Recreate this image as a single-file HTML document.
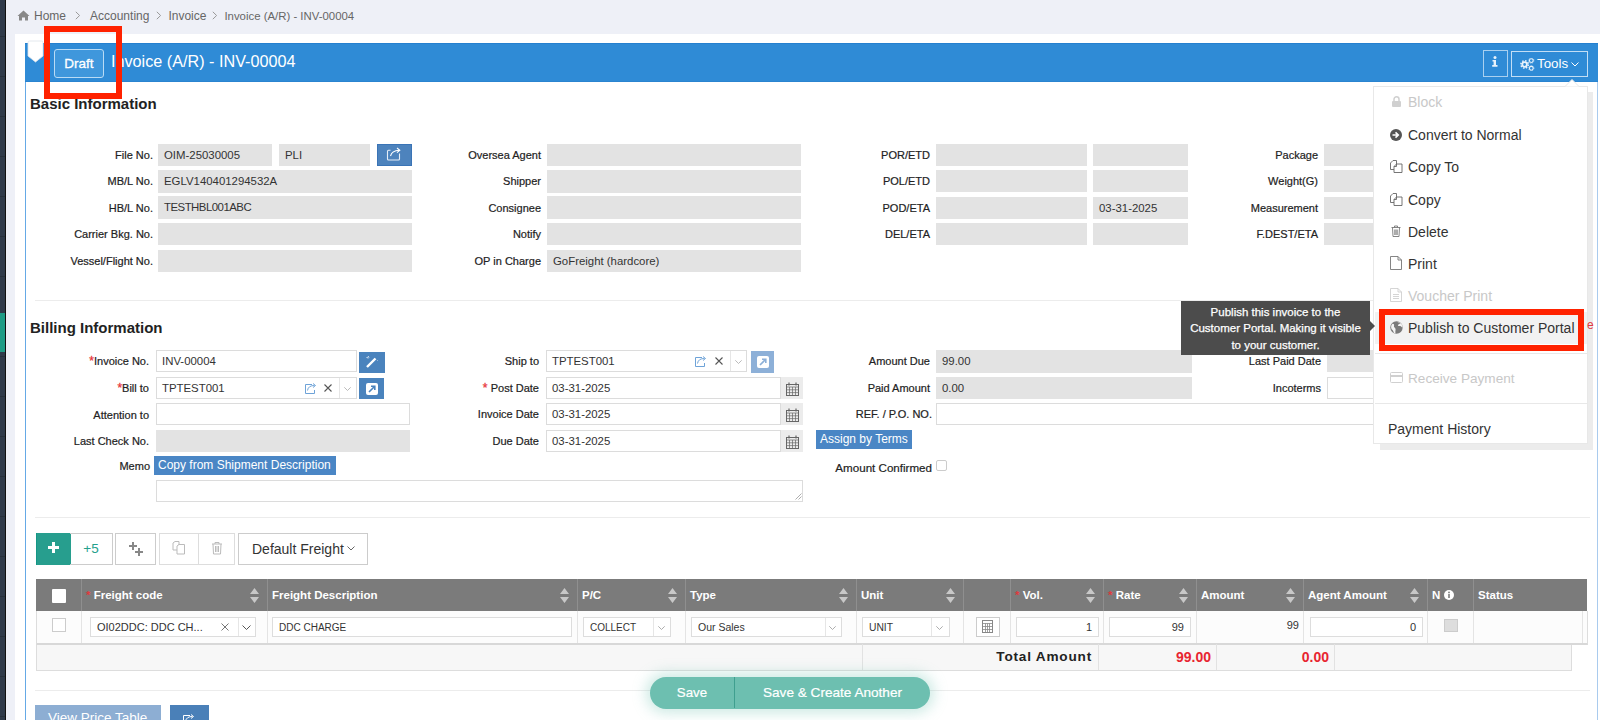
<!DOCTYPE html>
<html><head><meta charset="utf-8">
<style>
*{box-sizing:border-box;margin:0;padding:0}
html,body{width:1600px;height:720px;overflow:hidden;background:#eef0f7;font-family:"Liberation Sans",sans-serif;color:#333}
.a{position:absolute}
svg.a{overflow:visible}
.l{position:absolute;font-size:11px;color:#222;-webkit-text-stroke:0.2px #222;text-align:right;white-space:nowrap;height:22px;line-height:22px}
.g{position:absolute;background:#e3e3e3;height:22px;font-size:11.4px;color:#333;padding-left:6px;line-height:22px;white-space:nowrap}
.w{position:absolute;background:#fff;border:1px solid #dcdcdc;height:22px;font-size:11.4px;color:#333;padding-left:5px;line-height:20px;white-space:nowrap}
.mi{position:absolute;left:1408px;font-size:14px;color:#333;white-space:nowrap;line-height:16px;height:16px}
.mic{position:absolute;left:1390px}
.th{position:absolute;top:579px;height:32px;line-height:32px;color:#fff;font-weight:bold;font-size:11.5px;white-space:nowrap}
.cs{position:absolute;top:579px;width:1px;height:32px;background:#8f8f8f}
.rs{position:absolute;top:611px;width:1px;height:32px;background:#e4e4e4}
.sep{position:absolute;height:1px;background:#ececec}
.req{color:#e8363c;-webkit-text-stroke:0.3px #e8363c;font-size:12px}
.sort{position:absolute;top:588px}
.sel{position:absolute;top:617px;height:20px;background:#fff;border:1px solid #ddd;font-size:11px;line-height:19px;padding-left:6px;white-space:nowrap;color:#333}
.cal{position:absolute;width:22px;height:22px;background:#ececec}
</style></head><body>
<!-- left dark strip -->
<div class="a" style="left:0;top:0;width:5px;height:720px;background:#2f3a4a"></div>
<div class="a" style="left:5px;top:0;width:1px;height:720px;background:#111"></div>
<div class="a" style="left:0;top:36px;width:5px;height:1px;background:#27303c"></div><div class="a" style="left:0;top:76px;width:5px;height:1px;background:#27303c"></div><div class="a" style="left:0;top:116px;width:5px;height:1px;background:#27303c"></div><div class="a" style="left:0;top:156px;width:5px;height:1px;background:#27303c"></div><div class="a" style="left:0;top:196px;width:5px;height:1px;background:#27303c"></div><div class="a" style="left:0;top:236px;width:5px;height:1px;background:#27303c"></div><div class="a" style="left:0;top:276px;width:5px;height:1px;background:#27303c"></div><div class="a" style="left:0;top:356px;width:5px;height:1px;background:#27303c"></div><div class="a" style="left:0;top:396px;width:5px;height:1px;background:#27303c"></div><div class="a" style="left:0;top:436px;width:5px;height:1px;background:#27303c"></div><div class="a" style="left:0;top:476px;width:5px;height:1px;background:#27303c"></div><div class="a" style="left:0;top:516px;width:5px;height:1px;background:#27303c"></div><div class="a" style="left:0;top:556px;width:5px;height:1px;background:#27303c"></div><div class="a" style="left:0;top:596px;width:5px;height:1px;background:#27303c"></div><div class="a" style="left:0;top:636px;width:5px;height:1px;background:#27303c"></div><div class="a" style="left:0;top:676px;width:5px;height:1px;background:#27303c"></div><div class="a" style="left:0;top:716px;width:5px;height:1px;background:#27303c"></div>
<div class="a" style="left:0;top:313px;width:5px;height:39px;background:#1e9c86"></div>

<!-- breadcrumb -->
<div class="a" style="left:17px;top:8px;font-size:12px;color:#666;white-space:nowrap;line-height:16px">
<svg width="13" height="11" viewBox="0 0 13 11" style="vertical-align:-1px"><path d="M6.5 0.5 L0.5 6 L2 6 L2 10.5 L5 10.5 L5 7.5 L8 7.5 L8 10.5 L11 10.5 L11 6 L12.5 6 Z" fill="#888"/></svg><span style="margin-left:4px">Home</span><svg width="6" height="9" viewBox="0 0 6 9" style="margin:0 9px 0 9px;vertical-align:0px"><path d="M0.8 0.8 L4.6 4.5 L0.8 8.2" fill="none" stroke="#999" stroke-width="1"/></svg>Accounting<svg width="6" height="9" viewBox="0 0 6 9" style="margin:0 6px 0 7px;vertical-align:0px"><path d="M0.8 0.8 L4.6 4.5 L0.8 8.2" fill="none" stroke="#999" stroke-width="1"/></svg>Invoice<svg width="6" height="9" viewBox="0 0 6 9" style="margin:0 6px 0 6px;vertical-align:0px"><path d="M0.8 0.8 L4.6 4.5 L0.8 8.2" fill="none" stroke="#999" stroke-width="1"/></svg><span style="font-size:11.4px">Invoice (A/R) - INV-00004</span></div>

<!-- white card -->
<div class="a" style="left:15px;top:34px;width:1585px;height:686px;background:#fff"></div>
<div class="a" style="left:25px;top:43px;width:1573px;height:677px;border-left:1px solid #65a9e6;border-right:1px solid #a9cbee"></div>
<!-- blue header -->
<div class="a" style="left:25px;top:43px;width:1573px;height:39px;background:#2f8bd6;border-top:1px solid #2580cf;border-bottom:1px solid #2a84d0"></div>
<!-- bookmark -->
<svg class="a" style="left:27px;top:40px" width="18" height="24" viewBox="0 0 18 24"><path d="M2.5 1 H14.5 a1.5 1.5 0 0 1 1.5 1.5 V16 L8.5 22 L1 16 V2.5 a1.5 1.5 0 0 1 1.5 -1.5 Z" fill="#fff" stroke="#dde3ea" stroke-width="0.8"/></svg>
<!-- draft btn -->
<div class="a" style="left:54px;top:49px;width:50px;height:29px;border:1px solid #b9dbf5;border-radius:3px;background:#3f97dc;color:#fff;font-size:13.5px;text-align:center;line-height:27px;-webkit-text-stroke:0.3px #fff">Draft</div>
<div class="a" style="left:111px;top:51px;font-size:16.2px;color:#fff;line-height:20px;white-space:nowrap">Invoice (A/R) - INV-00004</div>
<!-- right header buttons -->
<div class="a" style="left:1483px;top:50px;width:25px;height:27px;border:1px solid #a9d0f0"></div>
<svg class="a" style="left:1491px;top:56px" width="8" height="11" viewBox="0 0 8 11"><circle cx="4" cy="1.5" r="1.5" fill="#e8f2fb"/><path d="M1.5 4 H5 V9 H6.5 V10.8 H1.2 V9 H2.6 V5.6 H1.5 Z" fill="#e8f2fb"/></svg>
<div class="a" style="left:1511px;top:51px;width:77px;height:26px;border:1px solid #c3def5;color:#fff;font-size:13px;line-height:23px;white-space:nowrap">
<svg width="15" height="13" viewBox="0 0 15 13" style="position:absolute;left:8px;top:6px"><circle cx="4.6" cy="6.5" r="3.7" fill="none" stroke="#e8f2fb" stroke-width="1.6" stroke-dasharray="1.45 1.46"/><circle cx="4.6" cy="6.5" r="2.3" fill="none" stroke="#e8f2fb" stroke-width="1.8"/><circle cx="11.3" cy="2.6" r="1.9" fill="none" stroke="#e8f2fb" stroke-width="1.1"/><circle cx="11.3" cy="2.6" r="2.6" fill="none" stroke="#e8f2fb" stroke-width="0.9" stroke-dasharray="0.8 1.24"/><circle cx="11.3" cy="10.3" r="1.9" fill="none" stroke="#e8f2fb" stroke-width="1.1"/><circle cx="11.3" cy="10.3" r="2.6" fill="none" stroke="#e8f2fb" stroke-width="0.9" stroke-dasharray="0.8 1.24"/></svg>
<span style="position:absolute;left:25px;top:0;font-size:13.3px">Tools</span>
<svg width="8" height="5" viewBox="0 0 8 5" style="position:absolute;left:59px;top:10px"><path d="M0.5 0.5 L4 4 L7.5 0.5" fill="none" stroke="#fff" stroke-width="1"/></svg>
</div>

<!-- Basic information -->
<div class="a" style="left:30px;top:95px;font-size:15px;font-weight:bold;color:#222;line-height:18px;white-space:nowrap">Basic Information</div>

<div class="l" style="right:1447px;top:144px">File No.</div>
<div class="g" style="left:158px;top:144px;width:114px">OIM-25030005</div>
<div class="g" style="left:279px;top:144px;width:91px">PLI</div>
<div class="a" style="left:377px;top:144px;width:35px;height:22px;background:#4d83bd;box-shadow:inset 0 0 0 1px #3a74b6"></div>
<svg class="a" style="left:386px;top:146px" width="16" height="16" viewBox="0 0 16 16"><path d="M4.5 4.3 H2.5 a1 1 0 0 0 -1 1 V13 a1 1 0 0 0 1 1 H12.5 a1 1 0 0 0 1 -1 V7.5" fill="none" stroke="#e6eef7" stroke-width="1.1"/><path d="M4.5 10 C5.5 6.5 8 4.5 13 4.3 M11 2 L13.8 4.3 L11 6.6" fill="none" stroke="#fff" stroke-width="1.1"/></svg>
<div class="l" style="right:1447px;top:170px">MB/L No.</div>
<div class="g" style="left:158px;top:170px;width:254px;height:23px">EGLV140401294532A</div>
<div class="l" style="right:1447px;top:196.5px">HB/L No.</div>
<div class="g" style="left:158px;top:196px;width:254px;height:23px;line-height:23px;letter-spacing:-0.5px">TESTHBL001ABC</div>
<div class="l" style="right:1447px;top:223px">Carrier Bkg. No.</div>
<div class="g" style="left:158px;top:223px;width:254px"></div>
<div class="l" style="right:1447px;top:250px">Vessel/Flight No.</div>
<div class="g" style="left:158px;top:250px;width:254px"></div>

<div class="l" style="right:1059px;top:144px">Oversea Agent</div>
<div class="g" style="left:547px;top:144px;width:254px"></div>
<div class="l" style="right:1059px;top:170px">Shipper</div>
<div class="g" style="left:547px;top:170px;width:254px;height:23px"></div>
<div class="l" style="right:1059px;top:196.5px">Consignee</div>
<div class="g" style="left:547px;top:196px;width:254px;height:23px;line-height:23px"></div>
<div class="l" style="right:1059px;top:223px">Notify</div>
<div class="g" style="left:547px;top:223px;width:254px"></div>
<div class="l" style="right:1059px;top:250px">OP in Charge</div>
<div class="g" style="left:547px;top:250px;width:254px">GoFreight (hardcore)</div>

<div class="l" style="right:670px;top:144px">POR/ETD</div>
<div class="g" style="left:936px;top:144px;width:151px"></div>
<div class="g" style="left:1093px;top:144px;width:95px"></div>
<div class="l" style="right:670px;top:170px">POL/ETD</div>
<div class="g" style="left:936px;top:170px;width:151px"></div>
<div class="g" style="left:1093px;top:170px;width:95px"></div>
<div class="l" style="right:670px;top:197px">POD/ETA</div>
<div class="g" style="left:936px;top:197px;width:151px"></div>
<div class="g" style="left:1093px;top:197px;width:95px">03-31-2025</div>
<div class="l" style="right:670px;top:223px">DEL/ETA</div>
<div class="g" style="left:936px;top:223px;width:151px"></div>
<div class="g" style="left:1093px;top:223px;width:95px"></div>

<div class="l" style="right:282px;top:144px">Package</div>
<div class="g" style="left:1324px;top:144px;width:60px"></div>
<div class="l" style="right:282px;top:170px">Weight(G)</div>
<div class="g" style="left:1324px;top:170px;width:60px"></div>
<div class="l" style="right:282px;top:197px">Measurement</div>
<div class="g" style="left:1324px;top:197px;width:60px"></div>
<div class="l" style="right:282px;top:223px">F.DEST/ETA</div>
<div class="g" style="left:1324px;top:223px;width:60px"></div>

<div class="sep" style="left:35px;top:300px;width:1555px"></div>

<!-- Billing -->
<div class="a" style="left:30px;top:319px;font-size:15px;font-weight:bold;color:#222;line-height:18px;white-space:nowrap">Billing Information</div>

<div class="l" style="right:1451px;top:350px"><span class="req">*</span>Invoice No.</div>
<div class="w" style="left:156px;top:350px;width:201px">INV-00004</div>
<div class="a" style="left:359px;top:352px;width:26px;height:21px;background:#4a83bd"></div>
<svg class="a" style="left:365px;top:355px" width="14" height="14" viewBox="0 0 14 14"><path d="M2 12 L10.5 3.5" stroke="#fff" stroke-width="2.4"/><path d="M3 1 L4 2.5 M1.5 2.5 L3.5 3 M12 6 L12.5 5.5" stroke="#fff" stroke-width="0.8"/></svg>
<div class="l" style="right:1451px;top:377px"><span class="req">*</span>Bill to</div>
<div class="w" style="left:156px;top:377px;width:201px">TPTEST001</div>
<div class="a" style="left:339px;top:378px;width:1px;height:20px;background:#e6e6e6"></div>
<svg class="a" style="left:304px;top:381px" width="14" height="14" viewBox="0 0 14 14"><path d="M8 3.5 H1.5 V12.5 H10.5 V9" fill="none" stroke="#6ea3d8" stroke-width="1" stroke-linejoin="round"/><path d="M3.5 9.5 C4 6 6.5 4.5 10.5 4.5 M9 2.5 L11.5 4.5 L9 6.5" fill="none" stroke="#6ea3d8" stroke-width="1"/></svg>
<svg class="a" style="left:324px;top:384px" width="8" height="8" viewBox="0 0 8 8"><path d="M0.5 0.5 L7.5 7.5 M7.5 0.5 L0.5 7.5" stroke="#555" stroke-width="1.1"/></svg>
<svg class="a" style="left:344px;top:387px" width="7" height="4" viewBox="0 0 7 4"><path d="M0.3 0.3 L3.5 3.5 L6.7 0.3" fill="none" stroke="#aaa" stroke-width="0.8"/></svg>
<div class="a" style="left:359px;top:378px;width:25px;height:21px;background:#4a83bd"></div>
<div class="a" style="left:366px;top:383px;width:12px;height:12px;background:#fff;border-radius:2px"></div>
<svg class="a" style="left:366px;top:383px" width="12" height="12" viewBox="0 0 12 12"><path d="M3 9 L8.5 3.5 M5 3.2 H8.8 V7" fill="none" stroke="#4a83bd" stroke-width="1.6"/></svg>
<div class="l" style="right:1451px;top:404px">Attention to</div>
<div class="w" style="left:156px;top:403px;width:254px"></div>
<div class="l" style="right:1451px;top:430px">Last Check No.</div>
<div class="g" style="left:156px;top:430px;width:254px"></div>
<div class="l" style="right:1450px;top:455px">Memo</div>
<div class="a" style="left:154px;top:456px;width:182px;height:19px;background:#4a86c5;color:#fff;font-size:12px;line-height:19px;padding-left:4px;white-space:nowrap">Copy from Shipment Description</div>
<div class="w" style="left:156px;top:480px;width:647px;height:22px"></div>
<svg class="a" style="left:795px;top:493px" width="7" height="7" viewBox="0 0 7 7"><path d="M6.5 0.5 L0.5 6.5 M6.5 3.5 L3.5 6.5" stroke="#999" stroke-width="0.8"/></svg>

<div class="l" style="right:1061px;top:350px">Ship to</div>
<div class="w" style="left:546px;top:350px;width:201px">TPTEST001</div>
<div class="a" style="left:730px;top:351px;width:1px;height:20px;background:#e6e6e6"></div>
<svg class="a" style="left:694px;top:354px" width="14" height="14" viewBox="0 0 14 14"><path d="M8 3.5 H1.5 V12.5 H10.5 V9" fill="none" stroke="#6ea3d8" stroke-width="1" stroke-linejoin="round"/><path d="M3.5 9.5 C4 6 6.5 4.5 10.5 4.5 M9 2.5 L11.5 4.5 L9 6.5" fill="none" stroke="#6ea3d8" stroke-width="1"/></svg>
<svg class="a" style="left:715px;top:357px" width="8" height="8" viewBox="0 0 8 8"><path d="M0.5 0.5 L7.5 7.5 M7.5 0.5 L0.5 7.5" stroke="#555" stroke-width="1.1"/></svg>
<svg class="a" style="left:735px;top:360px" width="7" height="4" viewBox="0 0 7 4"><path d="M0.3 0.3 L3.5 3.5 L6.7 0.3" fill="none" stroke="#aaa" stroke-width="0.8"/></svg>
<div class="a" style="left:751px;top:351px;width:23px;height:22px;background:#8db0d8"></div>
<div class="a" style="left:757px;top:356px;width:12px;height:12px;background:#fff;border-radius:2px"></div>
<svg class="a" style="left:757px;top:356px" width="12" height="12" viewBox="0 0 12 12"><path d="M3 9 L8.5 3.5 M5 3.2 H8.8 V7" fill="none" stroke="#8db0d8" stroke-width="1.6"/></svg>
<div class="l" style="right:1061px;top:377px"><span class="req">* </span>Post Date</div>
<div class="w" style="left:546px;top:377px;width:235px">03-31-2025</div>
<div class="cal" style="left:781px;top:377px"></div>
<svg class="a" style="left:786px;top:382px" width="13" height="14" viewBox="0 0 13 14"><rect x="0.5" y="2.5" width="12" height="11" fill="none" stroke="#666" stroke-width="1"/><path d="M0.5 5 H12.5 M0.5 7.8 H12.5 M0.5 10.6 H12.5 M3.5 5 V13.5 M6.5 5 V13.5 M9.5 5 V13.5" stroke="#666" stroke-width="0.7"/><path d="M3 0.5 V3.5 M10 0.5 V3.5" stroke="#666" stroke-width="1.2"/></svg>
<div class="l" style="right:1061px;top:403px">Invoice Date</div>
<div class="w" style="left:546px;top:403px;width:235px">03-31-2025</div>
<div class="cal" style="left:781px;top:403px"></div>
<svg class="a" style="left:786px;top:408px" width="13" height="14" viewBox="0 0 13 14"><rect x="0.5" y="2.5" width="12" height="11" fill="none" stroke="#666" stroke-width="1"/><path d="M0.5 5 H12.5 M0.5 7.8 H12.5 M0.5 10.6 H12.5 M3.5 5 V13.5 M6.5 5 V13.5 M9.5 5 V13.5" stroke="#666" stroke-width="0.7"/><path d="M3 0.5 V3.5 M10 0.5 V3.5" stroke="#666" stroke-width="1.2"/></svg>
<div class="l" style="right:1061px;top:430px">Due Date</div>
<div class="w" style="left:546px;top:430px;width:235px">03-31-2025</div>
<div class="cal" style="left:781px;top:430px"></div>
<svg class="a" style="left:786px;top:435px" width="13" height="14" viewBox="0 0 13 14"><rect x="0.5" y="2.5" width="12" height="11" fill="none" stroke="#666" stroke-width="1"/><path d="M0.5 5 H12.5 M0.5 7.8 H12.5 M0.5 10.6 H12.5 M3.5 5 V13.5 M6.5 5 V13.5 M9.5 5 V13.5" stroke="#666" stroke-width="0.7"/><path d="M3 0.5 V3.5 M10 0.5 V3.5" stroke="#666" stroke-width="1.2"/></svg>

<div class="l" style="right:670px;top:350px">Amount Due</div>
<div class="g" style="left:936px;top:350px;width:256px;height:23px">99.00</div>
<div class="l" style="right:670px;top:377px">Paid Amount</div>
<div class="g" style="left:936px;top:377px;width:256px">0.00</div>
<div class="l" style="right:668px;top:403px">REF. / P.O. NO.</div>
<div class="w" style="left:936px;top:403px;width:450px"></div>
<div class="a" style="left:816px;top:430px;width:96px;height:19px;background:#4a86c5;color:#fff;font-size:12px;line-height:19px;padding-left:4px;white-space:nowrap">Assign by Terms</div>
<div class="l" style="right:668px;top:457px;font-size:11.6px">Amount Confirmed</div>
<div class="a" style="left:936px;top:460px;width:11px;height:11px;border:1px solid #ccc;border-radius:2px;background:#fff"></div>

<div class="l" style="right:279px;top:350px">Last Paid Date</div>
<div class="g" style="left:1327px;top:350px;width:60px"></div>
<div class="l" style="right:279px;top:377px">Incoterms</div>
<div class="w" style="left:1327px;top:377px;width:60px"></div>

<div class="sep" style="left:35px;top:517px;width:1555px"></div>

<!-- toolbar -->
<div class="a" style="left:36px;top:533px;width:35px;height:32px;background:#279e8e;border-left:1px solid #149686"></div>
<svg class="a" style="left:47px;top:541px" width="13" height="13" viewBox="0 0 13 13"><path d="M6.5 1 V12 M1 6.5 H12" stroke="#fff" stroke-width="3"/></svg>
<div class="a" style="left:70px;top:533px;width:43px;height:32px;border:1px solid #ccc;border-left:none;color:#24a08c;font-size:13.5px;text-align:center;line-height:30px">+5</div>
<div class="a" style="left:115px;top:533px;width:41px;height:32px;border:1px solid #ccc"></div>
<svg class="a" style="left:128px;top:541px" width="16" height="16" viewBox="0 0 16 16"><path d="M5 1 V9 M1 5 H9" stroke="#888" stroke-width="2"/><path d="M11 7 V15 M7 11 H15" stroke="#888" stroke-width="2"/></svg>
<div class="a" style="left:159px;top:533px;width:76px;height:32px;border:1px solid #ddd"></div>
<div class="a" style="left:198px;top:533px;width:1px;height:32px;background:#ddd"></div>
<svg class="a" style="left:172px;top:541px" width="14" height="14" viewBox="0 0 14 14"><path d="M1 2 L3 0.5 H7 V4 M1 2 V9 H5" fill="none" stroke="#bbb" stroke-width="1"/><path d="M5 5 L7 3.5 H12.5 V13 H5 Z" fill="none" stroke="#bbb" stroke-width="1"/></svg>
<svg class="a" style="left:211px;top:541px" width="12" height="14" viewBox="0 0 12 14"><path d="M1 3 H11 M4 3 V1.5 H8 V3 M2 3 L2.5 13 H9.5 L10 3 M4.5 5 V11 M6 5 V11 M7.5 5 V11" fill="none" stroke="#bbb" stroke-width="1"/></svg>
<div class="a" style="left:238px;top:533px;width:130px;height:32px;border:1px solid #ccc;font-size:14px;line-height:30px;padding-left:13px;color:#333;white-space:nowrap">Default Freight</div>
<svg class="a" style="left:347px;top:546px" width="8" height="5" viewBox="0 0 8 5"><path d="M0.5 0.5 L4 4 L7.5 0.5" fill="none" stroke="#666" stroke-width="1"/></svg>

<!-- table header -->
<div class="a" style="left:36px;top:579px;width:1551px;height:32px;background:#7b7b7b"></div>
<div class="a" style="left:52px;top:589px;width:14px;height:14px;background:#fff;border-radius:1px"></div>
<div class="cs" style="left:81px"></div><div class="cs" style="left:267px"></div><div class="cs" style="left:577px"></div><div class="cs" style="left:685px"></div><div class="cs" style="left:856px"></div><div class="cs" style="left:963px"></div><div class="cs" style="left:1010px"></div><div class="cs" style="left:1103px"></div><div class="cs" style="left:1196px"></div><div class="cs" style="left:1303px"></div><div class="cs" style="left:1427px"></div><div class="cs" style="left:1473px"></div>
<div class="th" style="left:86px"><span style="color:#e0393e">*</span> Freight code</div>
<div class="th" style="left:272px">Freight Description</div>
<div class="th" style="left:582px">P/C</div>
<div class="th" style="left:690px">Type</div>
<div class="th" style="left:861px">Unit</div>
<div class="th" style="left:1015px"><span style="color:#e0393e">*</span> Vol.</div>
<div class="th" style="left:1108px"><span style="color:#e0393e">*</span> Rate</div>
<div class="th" style="left:1201px">Amount</div>
<div class="th" style="left:1308px">Agent Amount</div>
<div class="th" style="left:1432px">N</div>
<svg class="a" style="left:1444px;top:590px" width="10" height="10" viewBox="0 0 10 10"><circle cx="5" cy="5" r="5" fill="#fff"/><path d="M5 4 V8" stroke="#7b7b7b" stroke-width="1.6"/><circle cx="5" cy="2.4" r="0.9" fill="#7b7b7b"/></svg>
<div class="th" style="left:1478px">Status</div>
<!-- sort arrows -->
<svg class="sort" style="left:250px" width="9" height="15" viewBox="0 0 9 15"><path d="M4.5 0 L9 6 H0 Z M0 9 H9 L4.5 15 Z" fill="#c8c8c8"/></svg>
<svg class="sort" style="left:560px" width="9" height="15" viewBox="0 0 9 15"><path d="M4.5 0 L9 6 H0 Z M0 9 H9 L4.5 15 Z" fill="#c8c8c8"/></svg>
<svg class="sort" style="left:668px" width="9" height="15" viewBox="0 0 9 15"><path d="M4.5 0 L9 6 H0 Z M0 9 H9 L4.5 15 Z" fill="#c8c8c8"/></svg>
<svg class="sort" style="left:839px" width="9" height="15" viewBox="0 0 9 15"><path d="M4.5 0 L9 6 H0 Z M0 9 H9 L4.5 15 Z" fill="#c8c8c8"/></svg>
<svg class="sort" style="left:946px" width="9" height="15" viewBox="0 0 9 15"><path d="M4.5 0 L9 6 H0 Z M0 9 H9 L4.5 15 Z" fill="#c8c8c8"/></svg>
<svg class="sort" style="left:1086px" width="9" height="15" viewBox="0 0 9 15"><path d="M4.5 0 L9 6 H0 Z M0 9 H9 L4.5 15 Z" fill="#c8c8c8"/></svg>
<svg class="sort" style="left:1179px" width="9" height="15" viewBox="0 0 9 15"><path d="M4.5 0 L9 6 H0 Z M0 9 H9 L4.5 15 Z" fill="#c8c8c8"/></svg>
<svg class="sort" style="left:1286px" width="9" height="15" viewBox="0 0 9 15"><path d="M4.5 0 L9 6 H0 Z M0 9 H9 L4.5 15 Z" fill="#c8c8c8"/></svg>
<svg class="sort" style="left:1410px" width="9" height="15" viewBox="0 0 9 15"><path d="M4.5 0 L9 6 H0 Z M0 9 H9 L4.5 15 Z" fill="#c8c8c8"/></svg>

<!-- data row -->
<div class="a" style="left:36px;top:611px;width:1552px;height:34px;background:#fcfcfc;border-left:1px solid #ddd;border-right:1px solid #ddd;border-bottom:2px solid #d8d8d8"></div>
<div class="rs" style="left:81px"></div><div class="rs" style="left:267px"></div><div class="rs" style="left:577px"></div><div class="rs" style="left:685px"></div><div class="rs" style="left:856px"></div><div class="rs" style="left:963px"></div><div class="rs" style="left:1010px"></div><div class="rs" style="left:1103px"></div><div class="rs" style="left:1196px"></div><div class="rs" style="left:1303px"></div><div class="rs" style="left:1427px"></div><div class="rs" style="left:1473px"></div><div class="rs" style="left:1582px"></div>
<div class="a" style="left:52px;top:618px;width:14px;height:14px;border:1px solid #ccc;background:#fff"></div>
<div class="sel" style="left:90px;width:166px">OI02DDC: DDC CH...</div>
<div class="a" style="left:238px;top:618px;width:1px;height:18px;background:#e6e6e6"></div>
<svg class="a" style="left:221px;top:623px" width="8" height="8" viewBox="0 0 8 8"><path d="M0.5 0.5 L7.5 7.5 M7.5 0.5 L0.5 7.5" stroke="#777" stroke-width="1"/></svg>
<svg class="a" style="left:242px;top:625px" width="9" height="5" viewBox="0 0 9 5"><path d="M0.5 0.5 L4.5 4.5 L8.5 0.5" fill="none" stroke="#555" stroke-width="1"/></svg>
<div class="sel" style="left:272px;width:300px;padding-left:6px;font-size:10px">DDC CHARGE</div>
<div class="sel" style="left:583px;width:88px;font-size:10px">COLLECT</div>
<div class="a" style="left:653px;top:618px;width:1px;height:18px;background:#e6e6e6"></div>
<svg class="a" style="left:658px;top:626px" width="7" height="4" viewBox="0 0 7 4"><path d="M0.3 0.3 L3.5 3.5 L6.7 0.3" fill="none" stroke="#999" stroke-width="0.8"/></svg>
<div class="sel" style="left:691px;width:151px;font-size:10.5px">Our Sales</div>
<div class="a" style="left:825px;top:618px;width:1px;height:18px;background:#e6e6e6"></div>
<svg class="a" style="left:829px;top:626px" width="7" height="4" viewBox="0 0 7 4"><path d="M0.3 0.3 L3.5 3.5 L6.7 0.3" fill="none" stroke="#999" stroke-width="0.8"/></svg>
<div class="sel" style="left:862px;width:88px;font-size:10.3px">UNIT</div>
<div class="a" style="left:931px;top:618px;width:1px;height:18px;background:#e6e6e6"></div>
<svg class="a" style="left:936px;top:626px" width="7" height="4" viewBox="0 0 7 4"><path d="M0.3 0.3 L3.5 3.5 L6.7 0.3" fill="none" stroke="#999" stroke-width="0.8"/></svg>
<div class="a" style="left:976px;top:617px;width:24px;height:20px;border:1px solid #ccc;background:#fff"></div>
<svg class="a" style="left:982px;top:620px" width="11" height="13" viewBox="0 0 11 13"><rect x="0.5" y="0.5" width="10" height="12" fill="none" stroke="#888"/><path d="M0.5 3.5 H10.5 M0.5 6.5 H10.5 M0.5 9.5 H10.5 M3.5 3.5 V12.5 M5.5 3.5 V12.5 M7.5 3.5 V12.5" stroke="#888" stroke-width="0.8"/></svg>
<div class="sel" style="left:1016px;width:83px;text-align:right;padding-right:6px">1</div>
<div class="sel" style="left:1109px;width:82px;text-align:right;padding-right:6px">99</div>
<div class="a" style="left:1200px;top:617px;width:99px;text-align:right;font-size:11px;line-height:16px;color:#333">99</div>
<div class="sel" style="left:1310px;width:113px;text-align:right;padding-right:6px">0</div>
<div class="a" style="left:1444px;top:619px;width:14px;height:13px;background:#ddd;border:1px solid #ccc"></div>

<!-- total row -->
<div class="a" style="left:36px;top:645px;width:1536px;height:26px;background:#f7f7f7;border:1px solid #ddd;border-top:none"></div>
<div class="a" style="left:862px;top:644px;width:1px;height:26px;background:#e2e2e2"></div>
<div class="a" style="left:1098px;top:644px;width:1px;height:26px;background:#e2e2e2"></div>
<div class="a" style="left:1216px;top:644px;width:1px;height:26px;background:#e2e2e2"></div>
<div class="a" style="left:1334px;top:644px;width:1px;height:26px;background:#e2e2e2"></div>
<div class="a" style="left:900px;top:648px;width:192px;text-align:right;font-size:13.6px;font-weight:bold;letter-spacing:0.8px;color:#222;line-height:18px">Total Amount</div>
<div class="a" style="left:1100px;top:648px;width:111px;text-align:right;font-size:14px;font-weight:bold;color:#e82530;line-height:18px">99.00</div>
<div class="a" style="left:1218px;top:648px;width:111px;text-align:right;font-size:14px;font-weight:bold;color:#e82530;line-height:18px">0.00</div>

<div class="sep" style="left:35px;top:690px;width:1555px"></div>

<!-- bottom buttons -->
<div class="a" style="left:35px;top:705px;width:126px;height:20px;background:#8daed3;color:#fff;font-size:13.5px;line-height:26px;padding-left:13px;white-space:nowrap">View Price Table</div>
<div class="a" style="left:170px;top:705px;width:39px;height:20px;background:#4a80b8"></div>
<svg class="a" style="left:182px;top:712px" width="14" height="14" viewBox="0 0 14 14"><path d="M8 3.5 H1.5 V12.5 H10.5 V9" fill="none" stroke="#fff" stroke-width="1"/><path d="M3.5 9.5 C4 6 6.5 4.5 10.5 4.5 M9 2.5 L11.5 4.5 L9 6.5" fill="none" stroke="#fff" stroke-width="1"/></svg>

<!-- save bar -->
<div class="a" style="left:650px;top:677px;width:280px;height:31.6px;border-radius:16px;background:#6dbfb0;box-shadow:0 0 14px 4px rgba(109,191,176,.35)"></div>
<div class="a" style="left:734px;top:677px;width:1px;height:31px;background:#3f9f8f"></div>
<div class="a" style="left:650px;top:677px;width:84px;height:31px;color:#fff;font-size:13.3px;text-align:center;line-height:31px;-webkit-text-stroke:0.2px #fff">Save</div>
<div class="a" style="left:735px;top:677px;width:195px;height:31px;color:#fff;font-size:14px;text-align:center;line-height:31px;padding-right:0px;padding-left:0;white-space:nowrap;font-size:13.6px;padding-left:0;-webkit-text-stroke:0.2px #fff">Save &amp; Create Another</div>

<!-- dropdown -->
<div class="a" style="left:1587px;top:92px;width:6px;height:358px;background:#ececec"></div>
<div class="a" style="left:1380px;top:444px;width:213px;height:6px;background:#ececec"></div>
<div class="a" style="left:1373px;top:86px;width:215px;height:358px;background:#fff;border:1px solid #e8e8e8"></div>
<svg class="a" style="left:1565px;top:79px" width="14" height="8" viewBox="0 0 14 8"><path d="M0 7.5 L7 0.5 L14 7.5" fill="#fff" stroke="#e8e8e8" stroke-width="1"/></svg>
<div class="a" style="left:1375px;top:312px;width:212px;height:32px;background:#f2f2f2"></div>
<div class="a" style="left:1375px;top:353px;width:212px;height:1px;background:#e8e8e8"></div>
<div class="a" style="left:1375px;top:403px;width:212px;height:1px;background:#e8e8e8"></div>

<div class="mi" style="top:94px;color:#c8c8c8">Block</div>
<div class="mi" style="top:127px">Convert to Normal</div>
<div class="mi" style="top:159px">Copy To</div>
<div class="mi" style="top:192px">Copy</div>
<div class="mi" style="top:224px">Delete</div>
<div class="mi" style="top:256px">Print</div>
<div class="mi" style="top:288px;color:#c8c8c8">Voucher Print</div>
<div class="mi" style="top:320px">Publish to Customer Portal</div>
<div class="mi" style="top:371px;color:#c8c8c8;font-size:13.6px">Receive Payment</div>
<div class="mi" style="top:421px;left:1388px">Payment History</div>

<!-- menu icons -->
<svg class="mic" style="top:96px;left:1392px" width="9" height="11" viewBox="0 0 9 11"><path d="M2 5 V3.3 a2.5 2.5 0 0 1 5 0 V5" fill="none" stroke="#d0d0d0" stroke-width="1.5"/><rect x="0" y="5" width="9" height="6" rx="1" fill="#d0d0d0"/></svg>
<svg class="mic" style="top:129px" width="12" height="12" viewBox="0 0 12 12"><circle cx="6" cy="6" r="6" fill="#555"/><path d="M2.5 6 H8 M5.5 3.3 L8.3 6 L5.5 8.7" fill="none" stroke="#fff" stroke-width="1.6"/></svg>
<svg class="mic" style="top:160px" width="13" height="13" viewBox="0 0 13 13"><path d="M3 0.5 H6.5 V4 M3 0.5 L0.5 3 V9.5 H4" fill="none" stroke="#666" stroke-width="0.9"/><path d="M6.5 4 L4 6.5 V12.5 H12 V4 Z M4 6.5 H6.5 V4" fill="#fff" stroke="#666" stroke-width="0.9"/></svg>
<svg class="mic" style="top:193px" width="13" height="13" viewBox="0 0 13 13"><path d="M3 0.5 H6.5 V4 M3 0.5 L0.5 3 V9.5 H4" fill="none" stroke="#666" stroke-width="0.9"/><path d="M6.5 4 L4 6.5 V12.5 H12 V4 Z M4 6.5 H6.5 V4" fill="#fff" stroke="#666" stroke-width="0.9"/></svg>
<svg class="mic" style="top:225px;left:1391px" width="10" height="12" viewBox="0 0 10 12"><path d="M0.5 2.5 H9.5 M3.5 2.5 V1 H6.5 V2.5 M1.5 2.5 L2 11.5 H8 L8.5 2.5 M3.8 4.5 V10 M5 4.5 V10 M6.2 4.5 V10" fill="none" stroke="#777" stroke-width="0.9"/></svg>
<svg class="mic" style="top:256px" width="12" height="14" viewBox="0 0 12 14"><path d="M0.5 0.5 H8 L11.5 4 V13.5 H0.5 Z M8 0.5 V4 H11.5" fill="none" stroke="#777" stroke-width="0.9" stroke-linejoin="round"/></svg>
<svg class="mic" style="top:288px" width="12" height="14" viewBox="0 0 12 14"><path d="M0.5 0.5 H8 L11.5 4 V13.5 H0.5 Z M8 0.5 V4 H11.5 M3 6.5 H9 M3 8.5 H9 M3 10.5 H9" fill="none" stroke="#d0d0d0" stroke-width="0.9" stroke-linejoin="round"/></svg>
<svg class="mic" style="top:321px" width="13" height="13" viewBox="0 0 13 13"><circle cx="6.5" cy="6.5" r="6.2" fill="#7a7a7a"/><path d="M2.2 3 C3.5 2.5 4.5 3.5 4 5 C3.6 6.2 5 6.5 5.5 7.8 C5.9 9 5 10.5 5.5 12.3 L4 12 C3.5 10.5 3 9 1.8 8.5 C0.8 7 0.8 4.5 2.2 3 Z M7.5 1 C8.5 1.8 9.5 2.2 10.5 2.3 C9.8 3.2 8.5 3 8 4 C7.6 4.8 8.7 5.3 9.8 5 C11 4.8 11.8 6 12.3 7 L12.5 5 C12 3 10 1.2 7.5 1 Z" fill="#f2f2f2"/></svg>
<svg class="mic" style="top:372px" width="13" height="11" viewBox="0 0 13 11"><rect x="0.5" y="0.5" width="12" height="10" rx="1" fill="none" stroke="#d0d0d0"/><rect x="0.5" y="3" width="12" height="2" fill="#d0d0d0"/></svg>

<!-- red e behind -->
<div class="a" style="left:1587px;top:318px;font-size:12px;color:#e0393e;line-height:14px">e</div>

<!-- tooltip -->
<div class="a" style="left:1181px;top:301px;width:189px;height:54px;background:#4c4c4c;color:#fff;font-size:11.5px;text-align:center;line-height:16.4px;padding-top:3px;-webkit-text-stroke:0.25px #fff">Publish this invoice to the<br>Customer Portal. Making it visible<br>to your customer.</div>
<svg class="a" style="left:1370px;top:321px" width="5" height="10" viewBox="0 0 5 10"><path d="M0 0 L5 5 L0 10 Z" fill="#4c4c4c"/></svg>

<!-- red boxes -->
<div class="a" style="left:44px;top:26px;width:78px;height:73px;border:6px solid #ff2200"></div>
<div class="a" style="left:1379px;top:308.5px;width:205px;height:42px;border:6px solid #ff2200"></div>
</body></html>
